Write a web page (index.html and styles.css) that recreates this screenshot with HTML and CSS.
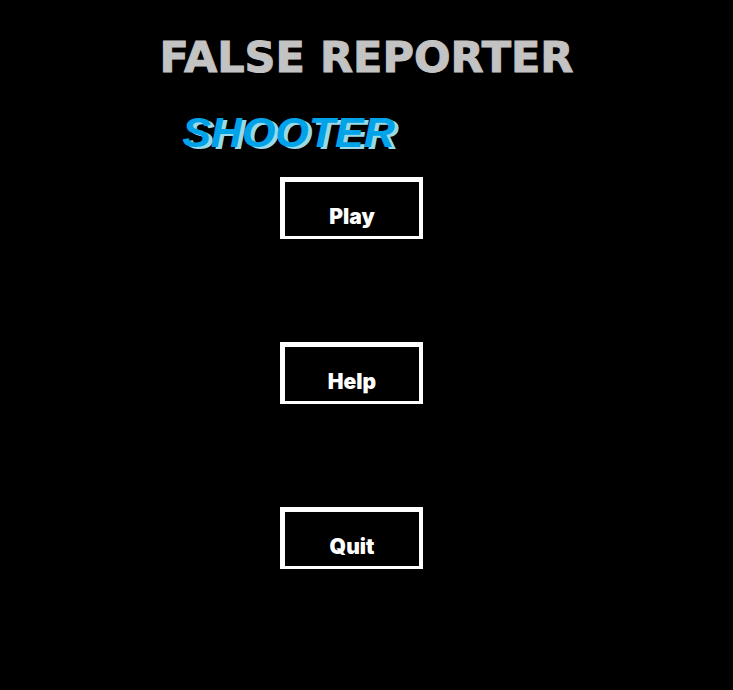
FILE: index.html
```html
<!DOCTYPE html>
<html lang="en">
  <head>
    <meta charset="UTF-8">
    <title>False Reporter Shooter</title>
    <link rel="stylesheet" href="styles.css">
  </head>
  <body>
    <header class="logo">
      <h1 class="title">FALSE REPORTER</h1>
      <h2 class="subtitle">SHOOTER</h2>
    </header>

    <nav class="menu">
      <button type="button">Play</button>
      <button type="button">Help</button>
      <button type="button">Quit</button>
    </nav>
  </body>
</html>
```
FILE: styles.css
```css
body {
  margin: 0;
  background: #000;
}

.logo {
  padding-top: 33px;
  text-align: center;
}

.title, .subtitle {
  margin: 0;
  font-size: 43px;
  line-height: 48px;
}

.title {
  font-family: "DejaVu Sans", Verdana, sans-serif;
  font-weight: bold;
  color: #c3c3c3;
  -webkit-text-stroke: 1px #c3c3c3;
}

.subtitle {
  margin-top: 27px;
  padding-right: 156px;
  font-family: "Liberation Sans", Arial, sans-serif;
  font-style: italic;
  color: #00a2e8;
  text-shadow: 4px 2px #99d9ea;
}

.menu {
  display: flex;
  flex-direction: column;
  align-items: center;
  gap: 103px;
  margin-top: 21px;
  padding-right: 30px;
}

.menu button {
  box-sizing: border-box;
  min-width: 143px;
  padding: 23px 16px 7px;
  border: solid #fff;
  border-width: 5px 4px 3px 5px;
  background: #000;
  color: #fff;
  font-family: Inter, "Liberation Sans", sans-serif;
  font-size: 21px;
  font-weight: 900;
  line-height: 24px;
  cursor: pointer;
}
```
